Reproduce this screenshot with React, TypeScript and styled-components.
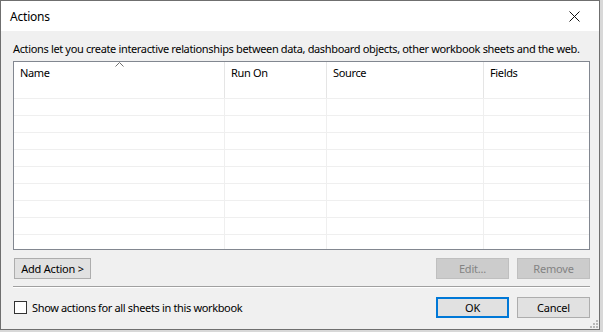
import React from 'react';
import styled, { createGlobalStyle } from 'styled-components';

const GlobalStyle = createGlobalStyle`
  html, body {
    margin: 0;
    padding: 0;
    background: #d8d8d8;
  }
  body {
    font-family: "Segoe UI", "Noto Sans", sans-serif;
    font-size: 11px;
    letter-spacing: -0.35px;
    color: #000;
  }
`;

const columns = [
  { title: 'Name', width: 211 },
  { title: 'Run On', width: 102 },
  { title: 'Source', width: 157 },
  { title: 'Fields', width: 105 },
];

const rows = Array.from({ length: 9 });

const App = () => {
  return (
    <>
      <GlobalStyle />
      <Window>
        <TitleBar>
          <span>Actions</span>
          <CloseButton aria-label="Close">
            <svg width="11" height="11" viewBox="0 0 11 11">
              <path d="M0.5 0.5 L10.5 10.5 M10.5 0.5 L0.5 10.5" stroke="#111" strokeWidth="1" />
            </svg>
          </CloseButton>
        </TitleBar>
        <Body>
          <Intro>
            Actions let you create interactive relationships between data, dashboard objects, other workbook sheets and the web.
          </Intro>
          <Table>
            <HeaderRow>
              {columns.map((col, i) => (
                <HeaderCell key={col.title} $width={col.width} $last={i === columns.length - 1}>
                  {col.title}
                  {i === 0 && (
                    <SortArrow width="9" height="5" viewBox="0 0 9 5">
                      <path d="M0.5 4.5 L4.5 0.5 L8.5 4.5" fill="none" stroke="#707070" strokeWidth="1" />
                    </SortArrow>
                  )}
                </HeaderCell>
              ))}
            </HeaderRow>
            {rows.map((_, r) => (
              <Row key={r} $last={r === rows.length - 1}>
                {columns.map((col, i) => (
                  <Cell key={col.title} $width={col.width} $last={i === columns.length - 1} />
                ))}
              </Row>
            ))}
          </Table>
          <ButtonRow>
            <Button $width={77}>Add Action &gt;</Button>
            <Spacer />
            <Button $width={73} disabled>
              Edit...
            </Button>
            <Button $width={73} disabled>
              Remove
            </Button>
          </ButtonRow>
          <Separator />
          <FooterRow>
            <CheckLabel>
              <CheckBox />
              Show actions for all sheets in this workbook
            </CheckLabel>
            <Spacer />
            <Button $width={73} $primary>
              OK
            </Button>
            <Button $width={73}>Cancel</Button>
          </FooterRow>
          <Grip>
            <svg width="8" height="8" viewBox="0 0 8 8">
              {[
                [6, 0],
                [6, 3],
                [3, 3],
                [6, 6],
                [3, 6],
                [0, 6],
              ].map(([x, y]) => (
                <rect key={`${x}-${y}`} x={x} y={y} width="2" height="2" fill="#b8b8b8" />
              ))}
            </svg>
          </Grip>
        </Body>
      </Window>
    </>
  );
};

const Window = styled.div`
  width: 600px;
  height: 330px;
  box-sizing: border-box;
  border: 1px solid #6f6f6f;
  background: #f0f0f0;
  display: flex;
  flex-direction: column;
`;

const TitleBar = styled.div`
  height: 30px;
  background: #fff;
  display: flex;
  align-items: center;
  justify-content: space-between;
  padding: 0 0 0 9px;
  font-size: 12px;
  letter-spacing: -0.2px;
`;

const CloseButton = styled.div`
  width: 46px;
  height: 30px;
  display: flex;
  align-items: center;
  justify-content: center;
  margin-right: 2px;
`;

const Body = styled.div`
  position: relative;
  flex: 1;
  padding: 0 9px 0 12px;
  display: flex;
  flex-direction: column;
`;

const Intro = styled.div`
  height: 30px;
  line-height: 36px;
  white-space: nowrap;
`;

const Table = styled.div`
  width: 577px;
  height: 189px;
  box-sizing: border-box;
  border: 1px solid #828790;
  background: #fff;
  overflow: hidden;
`;

const HeaderRow = styled.div`
  display: flex;
  height: 36px;
  border-bottom: 1px solid #efefef;
`;

const HeaderCell = styled.div<{ $width: number; $last?: boolean }>`
  position: relative;
  width: ${(p) => p.$width}px;
  flex: ${(p) => (p.$last ? 1 : 'none')};
  box-sizing: border-box;
  border-right: ${(p) => (p.$last ? 'none' : '1px solid #e5e5e5')};
  padding: 3px 0 0 6px;
  line-height: 16px;
`;

const SortArrow = styled.svg`
  position: absolute;
  top: 0;
  left: 101px;
`;

const Row = styled.div<{ $last?: boolean }>`
  display: flex;
  height: 17px;
  box-sizing: border-box;
  border-bottom: ${(p) => (p.$last ? 'none' : '1px solid #efefef')};
`;

const Cell = styled.div<{ $width: number; $last?: boolean }>`
  width: ${(p) => p.$width}px;
  flex: ${(p) => (p.$last ? 1 : 'none')};
  box-sizing: border-box;
  border-right: ${(p) => (p.$last ? 'none' : '1px solid #efefef')};
`;

const ButtonRow = styled.div`
  display: flex;
  gap: 8px;
  margin-top: 8px;
  width: 577px;
  padding-left: 1px;
  box-sizing: border-box;
`;

const FooterRow = styled.div`
  display: flex;
  align-items: center;
  gap: 8px;
  margin-top: 9px;
  width: 577px;
  box-sizing: border-box;
`;

const Spacer = styled.div`
  flex: 1;
`;

const Button = styled.button<{ $width: number; $primary?: boolean }>`
  width: ${(p) => p.$width}px;
  height: 21px;
  box-sizing: border-box;
  font-family: inherit;
  font-size: 11px;
  letter-spacing: -0.2px;
  padding: 0;
  color: #000;
  background: #e1e1e1;
  border: ${(p) => (p.$primary ? '2px solid #0078d7' : '1px solid #adadad')};
  &:disabled {
    color: #838383;
    background: #cccccc;
    border-color: #bfbfbf;
  }
`;

const Separator = styled.div`
  width: 577px;
  height: 1px;
  margin-top: 7px;
  background: #a0a0a0;
  border-bottom: 1px solid #fff;
`;

const CheckLabel = styled.label`
  display: flex;
  align-items: center;
  gap: 5px;
`;

const CheckBox = styled.span`
  display: inline-block;
  width: 13px;
  height: 13px;
  box-sizing: border-box;
  border: 1px solid #333;
  background: #fff;
  margin-left: 1px;
`;

const Grip = styled.div`
  position: absolute;
  right: 1px;
  bottom: 1px;
  line-height: 0;
`;

export default App;
